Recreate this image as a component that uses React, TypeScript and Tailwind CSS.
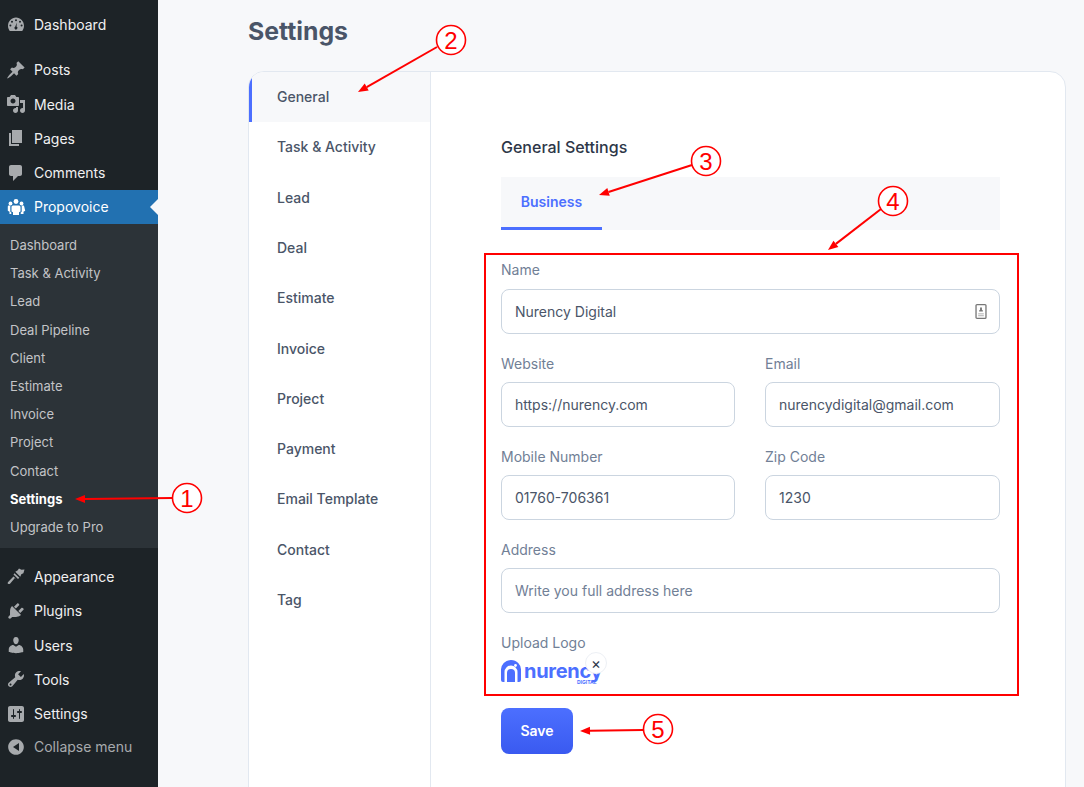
import React from "react";

type IconProps = { d: string; evenodd?: boolean };
const Dash = ({ d, evenodd }: IconProps) => (
  <svg viewBox="0 0 20 20" className="w-[20px] h-[20px]" fill="currentColor">
    <path d={d} fillRule={evenodd ? "evenodd" : undefined} />
  </svg>
);

const icons = {
  dashboard: "M3.76 16h12.48C17.34 14.57 18 12.79 18 10.860 18 6.170 14.420 2.530 10 2.530S2 6.170 2 10.860c0 1.930.660 3.710 1.760 5.140z M10 4.300a1 1 0 1 1 0 2a1 1 0 0 1 0-2z M6 5.700a1 1 0 1 1 0 2a1 1 0 0 1 0-2z M14 5.700a1 1 0 1 1 0 2a1 1 0 0 1 0-2z M4.400 9.500a1 1 0 1 1 0 2a1 1 0 0 1 0-2z M15.600 9.500a1 1 0 1 1 0 2a1 1 0 0 1 0-2z M10.900 7.500 10.500 11.600a1.500 1.500 0 1 1-1.300.1z",
  post: "M10.440 3.020l1.820-1.820 6.360 6.350-1.830 1.820c-1.050-.680-2.480-.570-3.410.360l-.750.750c-.920.930-1.040 2.350-.350 3.410l-1.830 1.820-2.410-2.410-2.800 2.790c-.420.420-3.380 2.710-3.800 2.290s1.860-3.390 2.280-3.810l2.790-2.790-2.410-2.410 1.830-1.820c1.050.690 2.480.570 3.400-.350l.750-.750c.930-.920 1.050-2.350.360-3.410z",
  media: "M13 11V4c0-.550-.450-1-1-1h-1.670L9 1H5L3.670 3H2c-.550 0-1 .450-1 1v7c0 .550.450 1 1 1h10c.550 0 1-.450 1-1zM7 4.500c1.380 0 2.500 1.120 2.500 2.500S8.380 9.500 7 9.500 4.500 8.380 4.500 7 5.620 4.500 7 4.500zM14 6h5v10.500c0 1.380-1.120 2.500-2.500 2.500S14 17.880 14 16.500s1.120-2.500 2.500-2.500c.170 0 .340.020.500.050V9h-3V6zm-4 8.050V13h2v3.500c0 1.380-1.120 2.500-2.500 2.500S7 17.880 7 16.500 8.120 14 9.500 14c.170 0 .340.020.500.050z",
  page: "M6 15V2h10v13H6zm-1 1h8v2H3V5h2v11z",
  comments: "M5 2h9c1.100 0 2 .900 2 2v7c0 1.100-.900 2-2 2h-2l-5 5v-5H5c-1.100 0-2-.900-2-2V4c0-1.100.900-2 2-2z",
  appearance: "M18.500 3.500 17.400 7.200 15.300 8.300 14.300 10.700 9.300 5.700 11.500 4.600 13 2.400 15.500 3.800z M13.300 11.700 12 13 7.500 8.500 8.500 7.300z M10.800 13.500 8.900 12 4 17.700c-.5.500-1.500.500-2 0s-.4-1.300.1-1.800L7.500 10.600z",
  plugins: "M13.110 4.360L9.870 7.600 8 5.730l3.240-3.240c.350-.340 1.050-.200 1.560.320.520.510.660 1.210.310 1.550zm-8 1.770l.910-1.120 9.010 9.010-1.190.840c-.710.710-2.630 1.160-3.820 1.160H6.140L4.900 17.260c-.590.590-1.540.590-2.120 0-.590-.580-.590-1.530 0-2.120l1.240-1.240v-3.880c0-1.130.400-3.190 1.090-3.890zm7.260 3.970l3.240-3.240c.340-.350 1.040-.210 1.550.310.520.510.660 1.210.310 1.550l-3.240 3.250z",
  users: "M10 9.250c-2.270 0-2.730-3.440-2.730-3.440C7 4.020 7.820 2 9.970 2c2.160 0 2.980 2.020 2.710 3.810 0 0-.410 3.440-2.680 3.440zm0 2.570L12.720 10c2.390 0 4.520 2.330 4.520 4.530v2.490s-3.650 1.130-7.240 1.130c-3.650 0-7.240-1.130-7.240-1.130v-2.490c0-2.250 1.940-4.480 4.470-4.480z",
  tools: "M16.680 9.770c-1.340 1.340-3.300 1.670-4.950.990l-5.410 6.520c-.990.990-2.590.990-3.580 0s-.990-2.590 0-3.570l6.520-5.420c-.680-1.650-.350-3.610.990-4.950 1.280-1.280 3.120-1.620 4.720-1.060l-2.890 2.890 2.820 2.820 2.860-2.870c.530 1.580.180 3.390-1.080 4.650zM3.810 16.210c.400.390 1.040.390 1.430 0 .400-.400.400-1.040 0-1.430-.390-.400-1.030-.400-1.430 0-.390.390-.390 1.030 0 1.430z",
  settings: "M18 16V4c0-1.100-.900-2-2-2H4c-1.100 0-2 .900-2 2v12c0 1.100.900 2 2 2h12c1.100 0 2-.900 2-2zM8 11h1c.550 0 1 .450 1 1s-.450 1-1 1H8v1.500c0 .280-.220.500-.500.500s-.500-.220-.500-.500V13H6c-.550 0-1-.450-1-1s.450-1 1-1h1V5.500c0-.280.220-.500.500-.500s.500.220.500.500V11zm5-2h-1c-.550 0-1-.450-1-1s.450-1 1-1h1V5.500c0-.280.220-.500.500-.500s.500.220.500.500V7h1c.550 0 1 .450 1 1s-.450 1-1 1h-1v5.500c0 .280-.220.500-.500.500s-.500-.220-.500-.500V9z",
  collapse: "M10 2.160c4.330 0 7.840 3.510 7.840 7.840S14.330 17.840 10 17.840 2.160 14.330 2.160 10 5.670 2.160 10 2.160z M13 6 7 10l6 4z",
};

const Groups = () => (
  <svg viewBox="0 0 20 20" className="w-[20px] h-[20px]" fill="currentColor">
    <circle cx="10" cy="4.500" r="2.400" />
    <circle cx="4.500" cy="6.500" r="1.900" />
    <circle cx="15.500" cy="6.500" r="1.900" />
    <path d="M7 8.500h6c.900 0 1.500.800 1.500 1.700v4.300l-1.500.800V18H7v-2.700l-1.500-.800v-4.300C5.500 9.300 6.100 8.500 7 8.500z" />
    <path d="M1.800 9.500c0-.500.500-1 1-1h1.500v6.300l1 .700V17H3.500v-2.200l-1.700-1z" />
    <path d="M18.200 9.500c0-.500-.500-1-1-1h-1.500v6.300l-1 .700V17h2.800v-2.200l1.700-1z" />
  </svg>
);

const top1: [string, string][] = [
  ["Posts", icons.post],
  ["Media", icons.media],
  ["Pages", icons.page],
  ["Comments", icons.comments],
];
const bottom: [string, string][] = [
  ["Appearance", icons.appearance],
  ["Plugins", icons.plugins],
  ["Users", icons.users],
  ["Tools", icons.tools],
  ["Settings", icons.settings],
];
const subs = ["Dashboard", "Task & Activity", "Lead", "Deal Pipeline", "Client", "Estimate", "Invoice", "Project", "Contact", "Settings", "Upgrade to Pro"];
const nav = ["General", "Task & Activity", "Lead", "Deal", "Estimate", "Invoice", "Project", "Payment", "Email Template", "Contact", "Tag"];

function MenuRow({ label, d, cls = "" }: { label: string; d: string; cls?: string }) {
  return (
    <div className={`flex items-center h-[34.3px] text-[14px] text-[#f0f0f1] ${cls}`}>
      <span className="w-[34px] shrink-0 flex justify-center pr-[2px] text-[#a7aaad]"><Dash d={d} evenodd /></span>
      <span>{label}</span>
    </div>
  );
}

function Field({ label, value, muted, cls = "flex-1", gap = "mt-[8px]", children }: { label: string; value: string; muted?: boolean; cls?: string; gap?: string; children?: React.ReactNode }) {
  return (
    <div className={`${cls} min-w-0`}>
      <div className="h-[20px] leading-[20px] text-[14px] text-[#718096]">{label}</div>
      <div className={`${gap} h-[45px] rounded-[8px] border border-[#cbd5e0] bg-white flex items-center justify-between pl-[13px] pr-[12px] text-[14px] ${muted ? "text-[#718096]" : "text-[#4a5568]"}`}>
        <span>{value}</span>
        {children}
      </div>
    </div>
  );
}

function Callout({ cx, cy, n, x1, y1, x2, y2 }: { cx: number; cy: number; n: string; x1: number; y1: number; x2: number; y2: number }) {
  const a = Math.atan2(y2 - y1, x2 - x1);
  const L = 10, W = 4;
  const bx = x2 - L * Math.cos(a), by = y2 - L * Math.sin(a);
  const p = `${x2},${y2} ${bx - W * Math.sin(a)},${by + W * Math.cos(a)} ${bx + W * Math.sin(a)},${by - W * Math.cos(a)}`;
  return (
    <g>
      <line x1={x1} y1={y1} x2={bx} y2={by} stroke="#ff0000" strokeWidth="2" />
      <polygon points={p} fill="#ff0000" />
      <circle cx={cx} cy={cy} r="14.500" fill="white" stroke="#ff0000" strokeWidth="1.600" />
      <text x={cx} y={cy + 8.500} textAnchor="middle" fontSize="24" fill="#ff0000" fontFamily="'Liberation Sans', sans-serif">{n}</text>
    </g>
  );
}

export default function App() {
  return (
    <div className="relative w-[1084px] h-[787px] overflow-hidden flex bg-[#f7f8fa] font-['Inter',sans-serif]">
      <aside className="w-[158px] shrink-0 bg-[#1d2327] pt-[7.400px]">
        <MenuRow label="Dashboard" d={icons.dashboard} cls="mb-[11px]" />
        {top1.map(([l, d]) => <MenuRow key={l} label={l} d={d} />)}
        <div className="relative flex items-center h-[34.100px] text-[14px] text-white bg-[#2271b1]">
          <span className="w-[34px] shrink-0 flex justify-center pr-[2px]"><Groups /></span>
          <span>Propovoice</span>
          <span className="absolute right-0 top-[9px] border-y-[8px] border-y-transparent border-r-[8px] border-r-[#f7f8fa]" />
        </div>
        <div className="bg-[#2c3338] pt-[7.700px] pb-[6.100px] mb-[11.500px]">
          {subs.map((s, i) => (
            <div key={i} className={`h-[28.200px] flex items-center pl-[10px] text-[13px] ${s === "Settings" ? "font-bold text-white" : "text-[#c3c4c7]"}`}>{s}</div>
          ))}
        </div>
        {bottom.map(([l, d]) => <MenuRow key={l} label={l} d={d} />)}
        <div className="flex items-center h-[32px] text-[14px] text-[#a7aaad]">
          <span className="w-[34px] shrink-0 flex justify-center pr-[2px]"><Dash d={icons.collapse} evenodd /></span>
          <span>Collapse menu</span>
        </div>
      </aside>

      <main className="flex-1 pl-[90px] pr-[18px]">
        <h1 className="h-[71px] pt-[13px] leading-[36px] text-[24.800px] font-bold text-[#4a5568]">Settings</h1>
        <div className="h-[800px] flex rounded-[16px] border border-[#e2e8f0] bg-white overflow-hidden">
          <div className="w-[182px] shrink-0 border-r border-[#e2e8f0]">
            {nav.map((n, i) => (
              <div key={n} className={`h-[50.300px] flex items-center pb-[1.200px] text-[14px] font-medium text-[#4a5568] ${i === 0 ? "bg-[#f7f8fa] border-l-[3px] border-[#4c6fff] pl-[25px]" : "pl-[28px]"}`}>{n}</div>
            ))}
          </div>
          <div className="flex-1 pl-[70px] pr-[65px] pt-[63px]">
            <h2 className="h-[24px] leading-[24px] text-[16px] font-medium text-[#2d3748]">General Settings</h2>
            <div className="mt-[18px] h-[53px] bg-[#f7f8fa]">
              <div className="w-[101px] h-[53px] border-b-[3px] border-[#4c6fff] flex items-center justify-center pb-[1px] text-[14px] font-semibold text-[#4c6fff]">Business</div>
            </div>
            <div className="mt-[30px] flex flex-col gap-[20px]">
              <Field label="Name" value="Nurency Digital" gap="mt-[9px]">
                <svg viewBox="0 0 12 16" className="w-[12px] h-[15px]" fill="none">
                  <rect x="0.700" y="0.700" width="10.600" height="14.600" rx="1" stroke="#777" strokeWidth="1.400" />
                  <path d="M6 3.500a1 1 0 0 1 1 1v1.500l1 1v1H4v-1l1-1V4.500a1 1 0 0 1 1-1z" fill="#777" />
                  <path d="M3 10.500h6M3 12.500h6" stroke="#aaa" strokeWidth="1" />
                </svg>
              </Field>
              <div className="flex gap-[30px]">
                <Field cls="w-[234px] shrink-0" label="Website" value="https://nurency.com" />
                <Field label="Email" value="nurencydigital@gmail.com" />
              </div>
              <div className="flex gap-[30px]">
                <Field cls="w-[234px] shrink-0" label="Mobile Number" value="01760-706361" />
                <Field label="Zip Code" value="1230" />
              </div>
              <Field label="Address" value="Write you full address here" muted />
            </div>
            <div className="mt-[20px] h-[20px] leading-[20px] text-[14px] text-[#718096]">Upload Logo</div>
            <div className="relative mt-[7px] w-[100px] h-[25px] flex items-start">
              <svg viewBox="0 0 20 22" className="w-[20px] h-[22px] shrink-0" fill="#4c6fff">
                <path fillRule="evenodd" d="M10 0a10 10 0 0 1 10 10.500v9.500a2 2 0 0 1-2 2h-1.500V12a6.500 6.500 0 0 0-13 0v10H2a2 2 0 0 1-2-2v-9.500A10 10 0 0 1 10 0z" />
                <path d="M10 9a4 4 0 0 1 4 4v9H6v-9a4 4 0 0 1 4-4z" />
                <circle cx="14.500" cy="5.500" r="1.400" fill="white" />
              </svg>
              <span className="ml-[3px] text-[20px] leading-[22px] font-bold text-[#4c6fff] tracking-[-0.300px]">nurency</span>
              <span className="absolute left-[76px] top-[19px] text-[5px] leading-[6px] font-bold text-[#4c6fff]">DIGITAL</span>
              <span className="absolute left-[84px] top-[-8px] w-[22px] h-[22px] rounded-full bg-white border border-[#edf0f5] flex items-center justify-center text-[15px] leading-none text-[#2d3748]">×</span>
            </div>
            <button className="mt-[23px] w-[72px] h-[46px] rounded-[8px] bg-gradient-to-b from-[#4c6fff] to-[#3a5af0] pb-[1px] text-white text-[14px] font-semibold">Save</button>
          </div>
        </div>
      </main>

      <svg className="absolute inset-0 pointer-events-none" width="1084" height="787" fill="none">
        <rect x="485" y="254" width="533" height="441" stroke="#ff0000" strokeWidth="2" fill="none" />
        <Callout cx={187} cy={498} n="1" x1={172} y1={498} x2={75} y2={499} />
        <Callout cx={451} cy={40} n="2" x1={437} y1={47} x2={358} y2={92} />
        <Callout cx={706} cy={161} n="3" x1={692} y1={165} x2={599} y2={195} />
        <Callout cx={893} cy={201} n="4" x1={881} y1={209} x2={828} y2={250} />
        <Callout cx={658} cy={729} n="5" x1={643} y1={730} x2={580} y2={731} />
      </svg>
    </div>
  );
}
